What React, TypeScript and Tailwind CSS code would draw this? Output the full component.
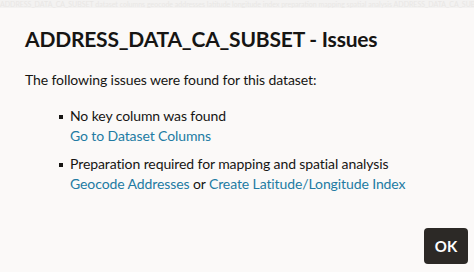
import React from "react";

export default function App() {
  const font = { fontFamily: 'Lato, "Open Sans", sans-serif' };
  return (
    <div className="w-[474px] h-[272px] bg-[#fbf9f8] overflow-hidden flex flex-col text-[#161513]" style={font}>
      <div className="h-[8px] bg-[#f3f2f1] overflow-hidden whitespace-nowrap text-[7px] leading-[8px] text-[#e9e7e5]">
        ADDRESS_DATA_CA_SUBSET dataset columns geocode addresses latitude longitude index preparation mapping spatial analysis ADDRESS_DATA_CA_SUBSET dataset columns geocode
      </div>
      <div className="px-[25px] pt-[16px] flex-1 flex flex-col">
        <h1 className="text-[21px] leading-[30px] font-bold whitespace-nowrap tracking-[-0.2px]">ADDRESS_DATA_CA_SUBSET - Issues</h1>
        <p className="mt-[16px] text-[14px] leading-[20px] whitespace-nowrap tracking-[-0.1px]">The following issues were found for this dataset:</p>
        <ul className="mt-[16px] pl-[34px] text-[14px] leading-[20px] whitespace-nowrap tracking-[-0.1px]">
          <li className="flex">
            <span className="w-[11px] shrink-0 flex pt-[9px]"><span className="w-[4px] h-[4px] bg-[#161513]"></span></span>
            <div>
              <div>No key column was found</div>
              <div className="text-[#227ba3]">Go to Dataset Columns</div>
            </div>
          </li>
          <li className="flex mt-[8px]">
            <span className="w-[11px] shrink-0 flex pt-[9px]"><span className="w-[4px] h-[4px] bg-[#161513]"></span></span>
            <div>
              <div>Preparation required for mapping and spatial analysis</div>
              <div><span className="text-[#227ba3]">Geocode Addresses</span> or <span className="text-[#227ba3]">Create Latitude/Longitude Index</span></div>
            </div>
          </li>
        </ul>
        <div className="flex justify-end mt-auto mb-[8px] -mr-[19px]">
          <button className="w-[44px] h-[36px] rounded-[4px] bg-[#2c2926] text-white text-[15px] font-bold">OK</button>
        </div>
      </div>
    </div>
  );
}
